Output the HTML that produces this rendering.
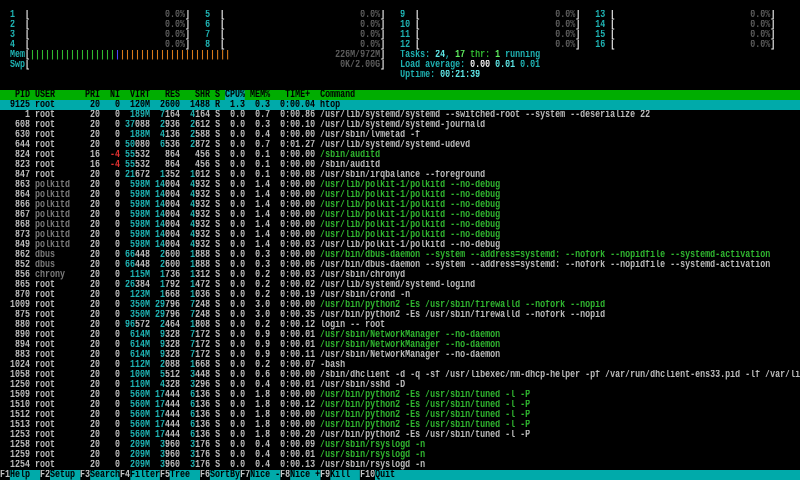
<!DOCTYPE html>
<html><head><meta charset="utf-8"><style>
html,body{margin:0;padding:0;background:#000;}
body{width:800px;height:479px;overflow:hidden;}
#s{width:1056px;transform:scaleX(0.7576);transform-origin:0 0;font-family:"Liberation Mono",monospace;font-weight:bold;font-size:11px;line-height:10px;color:#bdbdbd;}
#s div{height:10px;white-space:pre;overflow:hidden;width:1056px;}
.c{color:#1fb3b3}.bc{color:#5fe8e8}.g{color:#30b830}.bg{color:#60f060}.r{color:#e03030}.d{color:#7c7c7c}.k{color:#5c5c5c}.w{color:#f0f0f0}.n{color:#1fb3b3}
.bl{color:#4848ff}.o{color:#d87a1a}
.hd{background:#00ad00;color:#000}
.sel{background:#00aaaa;color:#000}
.cs{background:#00aaaa}
.ft{color:#c4c4c4}.fc{background:#00aaaa;color:#000}
</style></head><body><div id="s">
<div> </div>
<div>  <span class="n">1</span>  <span class="w">[</span>                           <span class="k">0.0%</span><span class="w">]</span>   <span class="n">5</span>  <span class="w">[</span>                           <span class="k">0.0%</span><span class="w">]</span>   <span class="n">9</span>  <span class="w">[</span>                           <span class="k">0.0%</span><span class="w">]</span>   <span class="n">13</span> <span class="w">[</span>                           <span class="k">0.0%</span><span class="w">]</span></div>
<div>  <span class="n">2</span>  <span class="w">[</span>                           <span class="k">0.0%</span><span class="w">]</span>   <span class="n">6</span>  <span class="w">[</span>                           <span class="k">0.0%</span><span class="w">]</span>   <span class="n">10</span> <span class="w">[</span>                           <span class="k">0.0%</span><span class="w">]</span>   <span class="n">14</span> <span class="w">[</span>                           <span class="k">0.0%</span><span class="w">]</span></div>
<div>  <span class="n">3</span>  <span class="w">[</span>                           <span class="k">0.0%</span><span class="w">]</span>   <span class="n">7</span>  <span class="w">[</span>                           <span class="k">0.0%</span><span class="w">]</span>   <span class="n">11</span> <span class="w">[</span>                           <span class="k">0.0%</span><span class="w">]</span>   <span class="n">15</span> <span class="w">[</span>                           <span class="k">0.0%</span><span class="w">]</span></div>
<div>  <span class="n">4</span>  <span class="w">[</span>                           <span class="k">0.0%</span><span class="w">]</span>   <span class="n">8</span>  <span class="w">[</span>                           <span class="k">0.0%</span><span class="w">]</span>   <span class="n">12</span> <span class="w">[</span>                           <span class="k">0.0%</span><span class="w">]</span>   <span class="n">16</span> <span class="w">[</span>                           <span class="k">0.0%</span><span class="w">]</span></div>
<div>  <span class="n">Mem</span><span class="w">[</span><span class="g">|||||||||||||||||</span><span class="bl">|</span><span class="o">||||||||||||||||||||||</span>                     <span class="k">226M/972M</span><span class="w">]</span>   <span class="n">Tasks: </span><span class="bc">24</span><span class="n">, </span><span class="bg">17</span><span class="g"> thr: </span><span class="bg">1</span><span class="n"> running</span></div>
<div>  <span class="n">Swp</span><span class="w">[</span>                                                              <span class="k">0K/2.00G</span><span class="w">]</span>   <span class="n">Load average: </span><span class="w">0.00 </span><span class="bc">0.01 </span><span class="n">0.01</span></div>
<div>                                                                                <span class="n">Uptime: </span><span class="bc">00:21:39</span></div>
<div> </div>
<div class="hd">   PID USER      PRI  NI  VIRT   RES   SHR S <span class="cs">CPU%</span> MEM%   TIME+  Command</div>
<div class="sel">  9125 root       20   0  120M  2600  1488 R  1.3  0.3  0:00.04 htop</div>
<div>     1 root       20   0  <span class="c">189M</span>  <span class="c">7</span>164  <span class="c">4</span>164 S  0.0  0.7  0:00.86 /usr/lib/systemd/systemd --switched-root --system --deserialize 22</div>
<div>   608 root       20   0 <span class="c">37</span>088  <span class="c">2</span>936  <span class="c">2</span>612 S  0.0  0.3  0:00.10 /usr/lib/systemd/systemd-journald</div>
<div>   630 root       20   0  <span class="c">188M</span>  <span class="c">4</span>136  <span class="c">2</span>588 S  0.0  0.4  0:00.00 /usr/sbin/lvmetad -f</div>
<div>   644 root       20   0 <span class="c">50</span>080  <span class="c">6</span>536  <span class="c">2</span>872 S  0.0  0.7  0:01.27 /usr/lib/systemd/systemd-udevd</div>
<div>   824 root       16  <span class="r">-4</span> <span class="c">55</span>532   864   456 S  0.0  0.1  0:00.00 <span class="g">/sbin/auditd</span></div>
<div>   823 root       16  <span class="r">-4</span> <span class="c">55</span>532   864   456 S  0.0  0.1  0:00.00 /sbin/auditd</div>
<div>   847 root       20   0 <span class="c">21</span>672  <span class="c">1</span>352  <span class="c">1</span>012 S  0.0  0.1  0:00.08 /usr/sbin/irqbalance --foreground</div>
<div>   863 <span class="d">polkitd</span>    20   0  <span class="c">598M</span> <span class="c">14</span>004  <span class="c">4</span>932 S  0.0  1.4  0:00.00 <span class="g">/usr/lib/polkit-1/polkitd --no-debug</span></div>
<div>   864 <span class="d">polkitd</span>    20   0  <span class="c">598M</span> <span class="c">14</span>004  <span class="c">4</span>932 S  0.0  1.4  0:00.00 <span class="g">/usr/lib/polkit-1/polkitd --no-debug</span></div>
<div>   866 <span class="d">polkitd</span>    20   0  <span class="c">598M</span> <span class="c">14</span>004  <span class="c">4</span>932 S  0.0  1.4  0:00.00 <span class="g">/usr/lib/polkit-1/polkitd --no-debug</span></div>
<div>   867 <span class="d">polkitd</span>    20   0  <span class="c">598M</span> <span class="c">14</span>004  <span class="c">4</span>932 S  0.0  1.4  0:00.00 <span class="g">/usr/lib/polkit-1/polkitd --no-debug</span></div>
<div>   868 <span class="d">polkitd</span>    20   0  <span class="c">598M</span> <span class="c">14</span>004  <span class="c">4</span>932 S  0.0  1.4  0:00.00 <span class="g">/usr/lib/polkit-1/polkitd --no-debug</span></div>
<div>   873 <span class="d">polkitd</span>    20   0  <span class="c">598M</span> <span class="c">14</span>004  <span class="c">4</span>932 S  0.0  1.4  0:00.00 <span class="g">/usr/lib/polkit-1/polkitd --no-debug</span></div>
<div>   849 <span class="d">polkitd</span>    20   0  <span class="c">598M</span> <span class="c">14</span>004  <span class="c">4</span>932 S  0.0  1.4  0:00.03 /usr/lib/polkit-1/polkitd --no-debug</div>
<div>   862 <span class="d">dbus</span>       20   0 <span class="c">66</span>448  <span class="c">2</span>600  <span class="c">1</span>888 S  0.0  0.3  0:00.00 <span class="g">/usr/bin/dbus-daemon --system --address=systemd: --nofork --nopidfile --systemd-activation</span></div>
<div>   852 <span class="d">dbus</span>       20   0 <span class="c">66</span>448  <span class="c">2</span>600  <span class="c">1</span>888 S  0.0  0.3  0:00.06 /usr/bin/dbus-daemon --system --address=systemd: --nofork --nopidfile --systemd-activation</div>
<div>   856 <span class="d">chrony</span>     20   0  <span class="c">115M</span>  <span class="c">1</span>736  <span class="c">1</span>312 S  0.0  0.2  0:00.03 /usr/sbin/chronyd</div>
<div>   865 root       20   0 <span class="c">26</span>384  <span class="c">1</span>792  <span class="c">1</span>472 S  0.0  0.2  0:00.02 /usr/lib/systemd/systemd-logind</div>
<div>   870 root       20   0  <span class="c">123M</span>  <span class="c">1</span>668  <span class="c">1</span>036 S  0.0  0.2  0:00.19 /usr/sbin/crond -n</div>
<div>  1009 root       20   0  <span class="c">350M</span> <span class="c">29</span>796  <span class="c">7</span>248 S  0.0  3.0  0:00.00 <span class="g">/usr/bin/python2 -Es /usr/sbin/firewalld --nofork --nopid</span></div>
<div>   875 root       20   0  <span class="c">350M</span> <span class="c">29</span>796  <span class="c">7</span>248 S  0.0  3.0  0:00.35 /usr/bin/python2 -Es /usr/sbin/firewalld --nofork --nopid</div>
<div>   880 root       20   0 <span class="c">96</span>572  <span class="c">2</span>464  <span class="c">1</span>808 S  0.0  0.2  0:00.12 login -- root</div>
<div>   890 root       20   0  <span class="c">614M</span>  <span class="c">9</span>328  <span class="c">7</span>172 S  0.0  0.9  0:00.01 <span class="g">/usr/sbin/NetworkManager --no-daemon</span></div>
<div>   894 root       20   0  <span class="c">614M</span>  <span class="c">9</span>328  <span class="c">7</span>172 S  0.0  0.9  0:00.01 <span class="g">/usr/sbin/NetworkManager --no-daemon</span></div>
<div>   883 root       20   0  <span class="c">614M</span>  <span class="c">9</span>328  <span class="c">7</span>172 S  0.0  0.9  0:00.11 /usr/sbin/NetworkManager --no-daemon</div>
<div>  1024 root       20   0  <span class="c">112M</span>  <span class="c">2</span>088  <span class="c">1</span>668 S  0.0  0.2  0:00.07 -bash</div>
<div>  1058 root       20   0  <span class="c">100M</span>  <span class="c">5</span>512  <span class="c">3</span>448 S  0.0  0.6  0:00.00 /sbin/dhclient -d -q -sf /usr/libexec/nm-dhcp-helper -pf /var/run/dhclient-ens33.pid -lf /var/lib/dhclient/dhclient.leases</div>
<div>  1250 root       20   0  <span class="c">110M</span>  <span class="c">4</span>328  <span class="c">3</span>296 S  0.0  0.4  0:00.01 /usr/sbin/sshd -D</div>
<div>  1509 root       20   0  <span class="c">560M</span> <span class="c">17</span>444  <span class="c">6</span>136 S  0.0  1.8  0:00.00 <span class="g">/usr/bin/python2 -Es /usr/sbin/tuned -l -P</span></div>
<div>  1510 root       20   0  <span class="c">560M</span> <span class="c">17</span>444  <span class="c">6</span>136 S  0.0  1.8  0:00.12 <span class="g">/usr/bin/python2 -Es /usr/sbin/tuned -l -P</span></div>
<div>  1512 root       20   0  <span class="c">560M</span> <span class="c">17</span>444  <span class="c">6</span>136 S  0.0  1.8  0:00.00 <span class="g">/usr/bin/python2 -Es /usr/sbin/tuned -l -P</span></div>
<div>  1513 root       20   0  <span class="c">560M</span> <span class="c">17</span>444  <span class="c">6</span>136 S  0.0  1.8  0:00.00 <span class="g">/usr/bin/python2 -Es /usr/sbin/tuned -l -P</span></div>
<div>  1253 root       20   0  <span class="c">560M</span> <span class="c">17</span>444  <span class="c">6</span>136 S  0.0  1.8  0:00.20 /usr/bin/python2 -Es /usr/sbin/tuned -l -P</div>
<div>  1258 root       20   0  <span class="c">209M</span>  <span class="c">3</span>960  <span class="c">3</span>176 S  0.0  0.4  0:00.09 <span class="g">/usr/sbin/rsyslogd -n</span></div>
<div>  1259 root       20   0  <span class="c">209M</span>  <span class="c">3</span>960  <span class="c">3</span>176 S  0.0  0.4  0:00.01 <span class="g">/usr/sbin/rsyslogd -n</span></div>
<div>  1254 root       20   0  <span class="c">209M</span>  <span class="c">3</span>960  <span class="c">3</span>176 S  0.0  0.4  0:00.13 /usr/sbin/rsyslogd -n</div>
<div class="fc"><span class="ft" style="background:#000">F1</span>Help  <span class="ft" style="background:#000">F2</span>Setup <span class="ft" style="background:#000">F3</span>Search<span class="ft" style="background:#000">F4</span>Filter<span class="ft" style="background:#000">F5</span>Tree  <span class="ft" style="background:#000">F6</span>SortBy<span class="ft" style="background:#000">F7</span>Nice -<span class="ft" style="background:#000">F8</span>Nice +<span class="ft" style="background:#000">F9</span>Kill  <span class="ft" style="background:#000">F10</span>Quit</div>
</div></body></html>
